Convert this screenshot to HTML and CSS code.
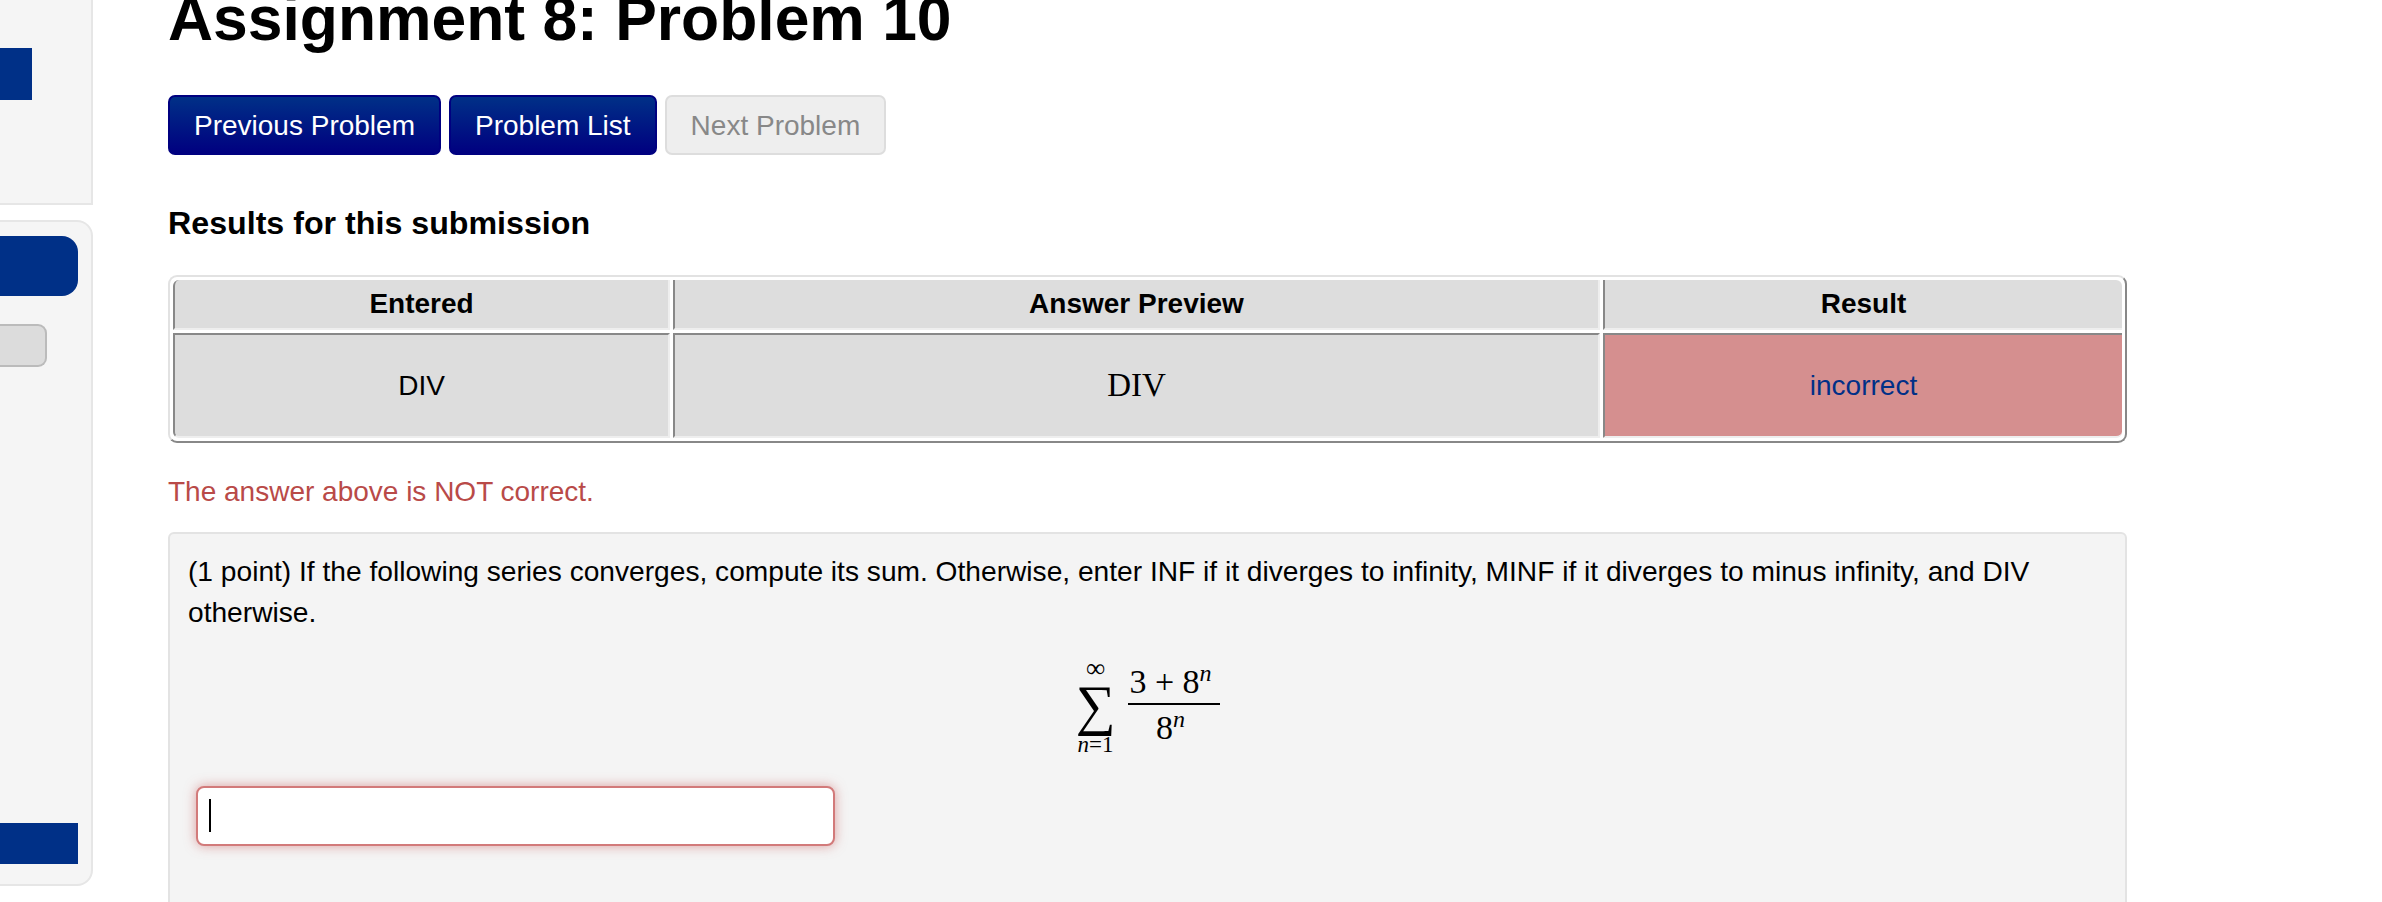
FILE: index.html
```html
<html>
<head>
  <title>Assignment 8: Problem 10</title>
  <link rel="stylesheet" href="styles.css">
</head>
<body>
  <div class="page">
    <div class="sidebar">
      <div class="panel panel-top">
        <div class="side-tab"></div>
      </div>
      <div class="panel panel-nav">
        <div class="side-pill"></div>
        <div class="side-btn"></div>
        <div class="side-block"></div>
      </div>
    </div>

    <div class="main">
      <h1>Assignment 8: Problem 10</h1>

      <div class="nav-buttons">
        <a class="btn">Previous Problem</a>
        <a class="btn">Problem List</a>
        <a class="btn btn-off">Next Problem</a>
      </div>

      <h2>Results for this submission</h2>

      <table class="results">
        <tr>
          <th class="col-entered">Entered</th>
          <th class="col-preview">Answer Preview</th>
          <th class="col-result">Result</th>
        </tr>
        <tr>
          <td>DIV</td>
          <td class="preview">DIV</td>
          <td class="incorrect">incorrect</td>
        </tr>
      </table>

      <p class="msg">The answer above is NOT correct.</p>

      <div class="problem">
        <p class="question">(1 point) If the following series converges, compute its sum. Otherwise, enter INF if it diverges to infinity, MINF if it diverges to minus infinity, and DIV otherwise.</p>

        <div class="math">
          <div class="sum">
            <span class="sum-top">∞</span>
            <span class="sum-sign">∑</span>
            <span class="sum-bottom"><i>n</i>=1</span>
          </div>
          <div class="frac">
            <div class="num">3 + 8<sup><i>n</i></sup></div>
            <div class="den">8<sup><i>n</i></sup></div>
          </div>
        </div>

        <div class="answer">
          <input type="text" class="answer-input">
          <span class="caret"></span>
        </div>
      </div>
    </div>
  </div>
</body>
</html>
```

FILE: styles.css
```css
html, body { margin: 0; height: 902px; overflow: hidden; background: #fff; }
body { font-family: "Liberation Sans", Arial, sans-serif; color: #000; }
.page { display: flex; height: 902px; }

/* left column, cut off by the window */
.sidebar { width: 93px; flex: none; }
.panel { background: #f5f5f5; border: 2px solid #e6e6e6; border-left: none; box-sizing: border-box; }
.panel-top { height: 205px; padding-top: 48px; border-top: none; }
.side-tab { width: 32px; height: 52px; background: #003087; }
.panel-nav { height: 666px; margin-top: 15px; padding-top: 14px; border-radius: 0 16px 16px 0; }
.side-pill { width: 78px; height: 60px; background: #003087; border-radius: 0 16px 16px 0; }
.side-btn { width: 47px; height: 43px; margin-top: 28px; background: #dcdcdc; border: 2px solid #bbb; border-left: none; border-radius: 0 9px 9px 0; box-sizing: border-box; }
.side-block { width: 78px; height: 41px; margin-top: 456px; background: #003087; }

.main { width: 1959px; margin-left: 75px; flex: none; }

h1 { margin: -17px 0 0; font-size: 62.4px; line-height: 72px; font-weight: bold; }

.nav-buttons { display: flex; gap: 8px; margin-top: 40px; }
.btn { display: block; height: 60px; padding: 0 24px; box-sizing: border-box; font-size: 28px; line-height: 57px; color: #fff; background: linear-gradient(to bottom, #003087, #000080); border: 2px solid #000080; border-radius: 7px; }
.btn-off { color: #888; background: #eee; border-color: #ddd; }

h2 { margin: 48px 0 0; font-size: 32.2px; line-height: 40px; font-weight: bold; }

.results { width: 100%; margin-top: 32px; border-collapse: separate; border-spacing: 3px; border: 2px solid; border-color: #e2e2e2 #888 #888 #e2e2e2; border-radius: 9px; table-layout: fixed; box-sizing: border-box; }
.results th, .results td { background: #ddd; text-align: center; border: 2px solid; border-color: #888 #eee #eee #888; font-size: 28px; padding: 0; }
.results th { height: 50px; font-weight: bold; border-top: none; }
.results td { height: 105px; }
.results th:first-child { border-radius: 6px 0 0 0; }
.results th:last-child { border-radius: 0 6px 0 0; border-right: none; }
.results td:first-child { border-radius: 0 0 0 6px; }
.results td:last-child { border-radius: 0 0 6px 0; border-right: none; }
.col-entered { width: 493px; }
.col-preview { width: 923px; }
.results .preview { font-family: "Liberation Serif", "Times New Roman", serif; font-size: 33px; }
.results .incorrect { background: #d58f8f; color: #003087; }

.msg { margin: 28px 0 0; font-size: 28px; line-height: 42px; color: #b94a48; }

.problem { height: 400px; margin-top: 19px; padding: 17px 18px; background: #f4f4f4; border: 2px solid #e3e3e3; border-radius: 6px; box-sizing: border-box; }
.question { margin: 0; font-size: 28.15px; line-height: 41px; }

.math { display: flex; justify-content: center; margin-top: 26px; font-family: "Liberation Serif", "Times New Roman", serif; }
.sum { display: flex; flex-direction: column; align-items: center; width: 40px; }
.sum-top { height: 18px; font-size: 27px; line-height: 18px; }
.sum-sign { height: 56px; font-size: 56px; line-height: 56px; }
.sum-bottom { height: 24px; font-size: 23px; line-height: 24px; white-space: nowrap; }
.frac { margin-left: 12px; width: 92px; text-align: center; font-size: 34px; }
.num { height: 44px; line-height: 46px; padding-right: 6px; border-bottom: 2px solid #000; white-space: nowrap; }
.den { line-height: 46px; padding-right: 6px; }
.frac sup { font-size: 24px; line-height: 0; vertical-align: 12px; }

.answer { position: relative; width: 639px; margin: 29px 0 0 8px; }
.answer-input { display: block; width: 100%; height: 60px; box-sizing: border-box; background: #fff; border: 2px solid #d27a7a; border-radius: 8px; box-shadow: 0 0 12px rgba(200, 90, 90, 0.55); outline: none; }
.caret { position: absolute; left: 13px; top: 13px; width: 2px; height: 33px; background: #000; }
```
